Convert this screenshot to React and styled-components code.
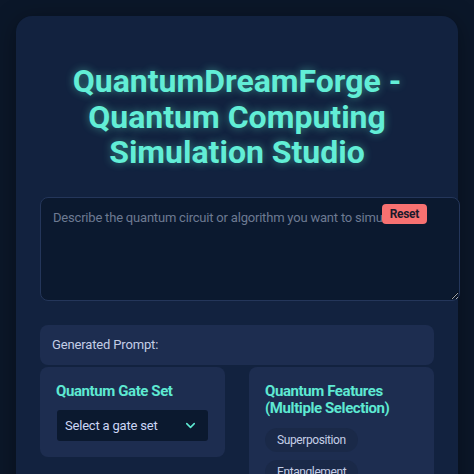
import React, { useState } from "react";
import styled, { createGlobalStyle } from "styled-components";
import { ChevronDown } from "lucide-react";

const GlobalStyle = createGlobalStyle`
  * { box-sizing: border-box; }
  body {
    margin: 0;
    background: #0b1729;
    font-family: Roboto, "Liberation Sans", sans-serif;
    color: #ccd6f6;
  }
`;

const Page = styled.div`
  padding: 16px;
`;

const Container = styled.main`
  background: #12223f;
  border-radius: 16px;
  padding: 24px;
  box-shadow: 0 4px 24px rgba(0, 0, 0, 0.35);
`;

const Title = styled.h1`
  margin: 24px 0 26px;
  text-align: center;
  font-size: 32px;
  line-height: 35.5px;
  font-weight: 700;
  color: #62eed6;
  text-shadow: 0 0 8px rgba(100, 255, 218, 0.45);
`;

const InputWrap = styled.div`
  position: relative;
`;

const PromptInput = styled.textarea`
  box-sizing: content-box;
  display: block;
  width: 100%;
  height: 78px;
  padding: 12px;
  margin: 0;
  background: #0b192f;
  border: 1px solid #24365a;
  border-radius: 8px;
  color: #ccd6f6;
  font-family: Roboto, "Liberation Sans", sans-serif;
  font-size: 13px;
  letter-spacing: -0.2px;
  line-height: 16px;
  outline: none;
  &::placeholder {
    color: #6d7a92;
  }
`;

const ResetButton = styled.button`
  position: absolute;
  top: 7px;
  right: 7px;
  padding: 4px 8px;
  border: none;
  border-radius: 4px;
  background: #f87171;
  color: #1b1a2b;
  font-family: Roboto, "Liberation Sans", sans-serif;
  font-size: 12px;
  letter-spacing: -0.3px;
  font-weight: 700;
  line-height: 12px;
  cursor: pointer;
`;

const PromptBox = styled.div`
  margin-top: 24px;
  padding: 10px 12px;
  background: #1d2d50;
  border-radius: 8px;
  font-size: 13px;
  letter-spacing: -0.15px;
  line-height: 20px;
  color: #c4cee6;
`;

const OptionsGrid = styled.div`
  display: grid;
  grid-template-columns: 1fr 1fr;
  gap: 24px;
  margin-top: 2px;
  align-items: start;
`;

const Card = styled.section`
  background: #1d2d50;
  border-radius: 8px;
  padding: 16px;
`;

const CardTitle = styled.h3`
  margin: 0 0 10px;
  font-size: 15px;
  letter-spacing: -0.4px;
  line-height: 17.5px;
  font-weight: 700;
  color: #5ee9d2;
`;

const SelectBox = styled.div`
  display: flex;
  align-items: center;
  justify-content: space-between;
  margin-left: 1px;
  width: 151px;
  height: 31px;
  padding: 0 10px 0 8px;
  background: #0b192f;
  border-radius: 3px;
  font-size: 13px;
  letter-spacing: -0.2px;
  color: #ccd6f6;
  svg {
    color: #5ee9d2;
  }
`;

const ChipList = styled.div`
  display: flex;
  flex-direction: column;
  align-items: flex-start;
  gap: 8px;
`;

const Chip = styled.button`
  padding: 0 12px;
  height: 24px;
  border: none;
  border-radius: 999px;
  background: ${(p) => (p.$active ? "#2a3f68" : "#1a2948")};
  color: #c4cee6;
  font-family: Roboto, "Liberation Sans", sans-serif;
  font-size: 12px;
  letter-spacing: -0.4px;
  cursor: pointer;
`;

const features = ["Superposition", "Entanglement", "Interference", "Decoherence"];

export default function App() {
  const [text, setText] = useState("");
  const [picked, setPicked] = useState([]);

  const toggle = (f) =>
    setPicked((cur) => (cur.includes(f) ? cur.filter((x) => x !== f) : [...cur, f]));

  return (
    <>
      <GlobalStyle />
      <Page>
        <Container>
          <Title>
            QuantumDreamForge -<br />
            Quantum Computing
            <br />
            Simulation Studio
          </Title>
          <InputWrap>
            <PromptInput
              value={text}
              onChange={(e) => setText(e.target.value)}
              placeholder="Describe the quantum circuit or algorithm you want to simulate..."
            />
            <ResetButton onClick={() => setText("")}>Reset</ResetButton>
          </InputWrap>
          <PromptBox>Generated Prompt: {text}</PromptBox>
          <OptionsGrid>
            <Card>
              <CardTitle>Quantum Gate Set</CardTitle>
              <SelectBox>
                <span>Select a gate set</span>
                <ChevronDown size={15} strokeWidth={2.5} />
              </SelectBox>
            </Card>
            <Card>
              <CardTitle>
                Quantum Features
                <br />
                (Multiple Selection)
              </CardTitle>
              <ChipList>
                {features.map((f) => (
                  <Chip key={f} $active={picked.includes(f)} onClick={() => toggle(f)}>
                    {f}
                  </Chip>
                ))}
              </ChipList>
            </Card>
          </OptionsGrid>
        </Container>
      </Page>
    </>
  );
}
